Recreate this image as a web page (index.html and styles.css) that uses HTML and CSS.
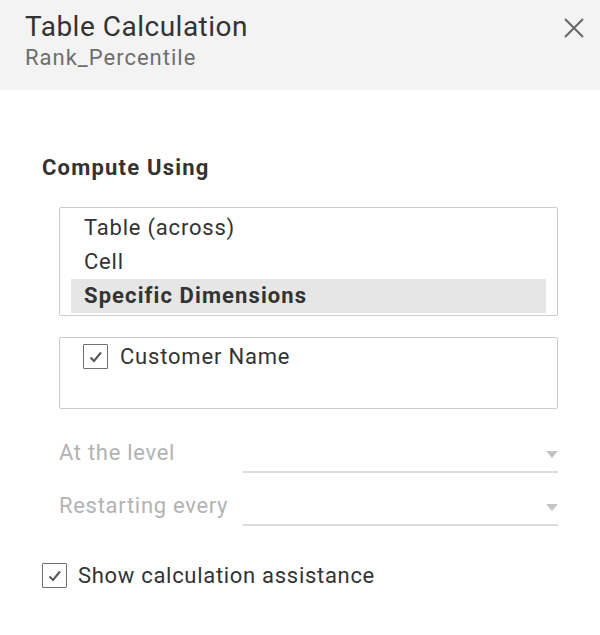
FILE: index.html
```html
<!DOCTYPE html>
<html lang="en">
    <head>
        <meta charset="UTF-8" />
        <meta name="viewport" content="width=device-width, initial-scale=1.0" />
        <title>Table Calculation</title>
        <link rel="stylesheet" href="styles.css">
    </head>
    <body>
        <div class="dialog">
            <div class="header">
                <div class="titles">
                    <div class="title">Table Calculation</div>
                    <div class="subtitle">Rank_Percentile</div>
                </div>
                <button class="close" aria-label="Close">
                    <svg viewBox="0 0 20 20" width="20" height="20">
                        <path d="M1 1 L19 19 M19 1 L1 19" stroke="#666" stroke-width="2" fill="none" />
                    </svg>
                </button>
            </div>

            <div class="body">
                <div class="section-title">Compute Using</div>

                <div class="indent">
                    <div class="listbox">
                        <div class="option">Table (across)</div>
                        <div class="option">Cell</div>
                        <div class="option selected">Specific Dimensions</div>
                    </div>

                    <div class="dimensions">
                        <label class="check-row">
                            <span class="checkbox">
                                <svg viewBox="0 0 16 16" width="16" height="16">
                                    <path d="M2.5 8.5 L6 12 L13 3.5" stroke="#555" stroke-width="2" fill="none" />
                                </svg>
                            </span>
                            Customer Name
                        </label>
                    </div>

                    <div class="field first">
                        <span class="field-label">At the level</span>
                        <div class="select"><span class="caret"></span></div>
                    </div>
                    <div class="field">
                        <span class="field-label">Restarting every</span>
                        <div class="select"><span class="caret"></span></div>
                    </div>
                </div>

                <label class="check-row assist">
                    <span class="checkbox">
                        <svg viewBox="0 0 16 16" width="16" height="16">
                            <path d="M2.5 8.5 L6 12 L13 3.5" stroke="#555" stroke-width="2" fill="none" />
                        </svg>
                    </span>
                    Show calculation assistance
                </label>
            </div>
        </div>
    </body>
</html>
```

FILE: styles.css
```css
body {
    margin: 0;
    background-color: #fff;
    font-family: Roboto, "Liberation Sans", sans-serif;
    color: #333;
}

.dialog {
    width: 600px;
}

.header {
    display: flex;
    justify-content: space-between;
    align-items: flex-start;
    height: 90px;
    box-sizing: border-box;
    padding: 9px 16px 0 25px;
    background-color: #f3f3f3;
}

.title {
    font-size: 28px;
    line-height: 35px;
    letter-spacing: 0.5px;
    color: #333;
}

.subtitle {
    font-size: 22px;
    line-height: 28px;
    letter-spacing: 1px;
    color: #6e6e6e;
}

.close {
    margin-top: 9px;
    padding: 0;
    border: none;
    background: none;
    width: 20px;
    height: 20px;
}

.body {
    padding: 64px 42px 0 42px;
}

.section-title {
    font-size: 22px;
    font-weight: bold;
    line-height: 28px;
    letter-spacing: 1.2px;
    color: #333;
}

.indent {
    padding-left: 17px;
    margin-top: 25px;
}

.listbox {
    border: 1px solid #cbcbcb;
    border-radius: 2px;
    padding: 3px 11px 2px 11px;
}

.option {
    height: 34px;
    line-height: 34px;
    padding-left: 13px;
    font-size: 22px;
    letter-spacing: 0.8px;
    color: #333;
}

.option.selected {
    background-color: #e6e6e6;
    font-weight: bold;
    letter-spacing: 1.1px;
}

.dimensions {
    margin-top: 21px;
    border: 1px solid #cbcbcb;
    border-radius: 2px;
    padding: 6px 23px 0 23px;
    box-sizing: border-box;
    height: 72px;
}

.check-row {
    display: flex;
    align-items: center;
    gap: 12px;
    font-size: 22px;
    letter-spacing: 0.8px;
    color: #333;
}

.checkbox {
    display: flex;
    align-items: center;
    justify-content: center;
    width: 23px;
    height: 23px;
    border: 1.5px solid #707070;
    border-radius: 1px;
    flex-shrink: 0;
}

.assist {
    margin-top: 37px;
    gap: 11px;
    letter-spacing: 0.7px;
}

.field {
    display: flex;
    align-items: flex-end;
    height: 53px;
}

.field.first {
    margin-top: 11px;
}

.field-label {
    width: 184px;
    font-size: 22px;
    line-height: 30px;
    letter-spacing: 0.7px;
    padding-bottom: 5px;
    color: #b3b3b3;
}

.select {
    flex: 1;
    height: 34px;
    border-bottom: 2px solid #dcdcdc;
    position: relative;
}

.caret {
    position: absolute;
    right: 0;
    top: 14px;
    border-left: 6px solid transparent;
    border-right: 6px solid transparent;
    border-top: 7px solid #c4c4c4;
}
```
